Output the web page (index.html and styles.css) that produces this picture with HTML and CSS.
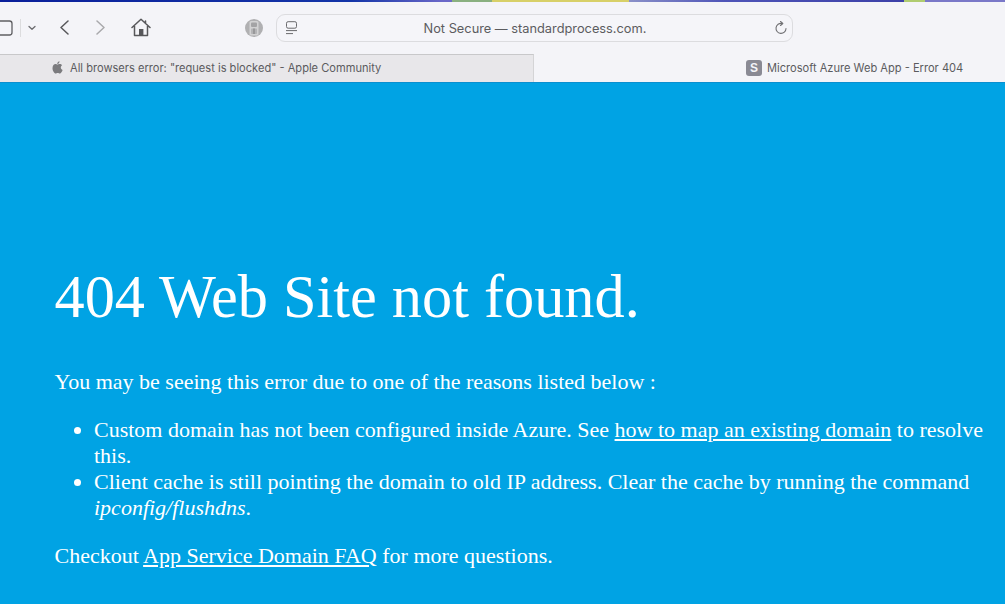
FILE: index.html
```html
<!DOCTYPE html>
<html lang="en">
<head>
<meta charset="utf-8">
<title>Microsoft Azure Web App - Error 404</title>
<link rel="stylesheet" href="styles.css">
</head>
<body>
<div class="window">
  <div class="wallpaper"></div>
  <header class="toolbar">
    <svg class="icon sidebar-btn" width="13" height="16" viewBox="0 0 13 16"><rect x="-4" y="1" width="16" height="14" rx="2.5" fill="none" stroke="#5f5f62" stroke-width="1.3"/></svg>
    <span class="divider"></span>
    <svg class="icon chevron-down" width="8" height="6" viewBox="0 0 8 6"><path d="M1 1.4 4 4.2 7 1.4" fill="none" stroke="#6b6b6e" stroke-width="1.3" stroke-linecap="round" stroke-linejoin="round"/></svg>
    <svg class="icon back" width="9" height="15" viewBox="0 0 9 15"><path d="M8 1 1 7.500l7 6.500" fill="none" stroke="#58585b" stroke-width="1.500" stroke-linecap="round" stroke-linejoin="round"/></svg>
    <svg class="icon forward" width="9" height="15" viewBox="0 0 9 15"><path d="M1 1 8 7.500l-7 6.500" fill="none" stroke="#a9a9ac" stroke-width="1.500" stroke-linecap="round" stroke-linejoin="round"/></svg>
    <svg class="icon home" width="20" height="19" viewBox="0 0 20 19"><path d="M1 9.500 10 1.200l9 8.300M3.500 8v9.600h13V8M14.500 3V5.600" fill="none" stroke="#57575a" stroke-width="1.500" stroke-linecap="round" stroke-linejoin="round"/><rect x="8" y="11" width="4.400" height="6.600" fill="#57575a"/></svg>
    <svg class="icon shield" width="18" height="18" viewBox="0 0 18 18"><circle cx="9" cy="9" r="9" fill="#b0b0b2"/><rect x="4.500" y="2" width="9" height="14.500" rx="1.500" fill="#d2d2d3"/><rect x="6" y="3.500" width="6" height="4.500" rx="1" fill="#a3a3a5"/><rect x="6" y="9.500" width="6" height="5.500" rx=".8" fill="#b4b4b6"/><rect x="8" y="9.500" width="2" height="5.500" fill="#98989a"/></svg>
    <div class="address">
      <svg class="icon reader" width="14" height="14" viewBox="0 0 14 14"><rect x="1.500" y="0.700" width="10" height="6.500" rx="1.600" fill="none" stroke="#6a6a6d" stroke-width="1"/><path d="M1 9.600h11M1 12.600h7" stroke="#6a6a6d" stroke-width="1"/></svg>
      <span class="address-text">Not Secure — standardprocess.com.</span>
      <svg class="icon reload" width="12" height="14" viewBox="0 0 12 14"><path d="M7 2.500A5 5 0 1 0 11 7.500" fill="none" stroke="#717174" stroke-width="1.100" stroke-linecap="round"/><path d="M5.500 0.500 7.800 2.500 5.500 4.500" fill="none" stroke="#717174" stroke-width="1.100" stroke-linecap="round" stroke-linejoin="round"/></svg>
    </div>
  </header>
  <nav class="tabs">
    <div class="tab tab-inactive">
      <svg class="favicon-apple" width="11" height="13" viewBox="0 0 11 13"><path d="M7.500 0.200C7.600 1.700 6.400 3 5.200 2.900 5.100 1.600 6.300 0.300 7.500 0.200ZM5.300 3.600c.6 0 1.300-.6 2.400-.6 1 0 1.900.5 2.400 1.300-2 1.200-1.600 3.900.5 4.700-.5 1.400-1.600 3.500-2.800 3.500-.8 0-1.100-.5-2.100-.5s-1.300.5-2.100.5C2.300 12.500.5 9.800.5 7.200.5 4.600 2 3 3.600 3c.7 0 1.300.6 1.700.6Z" fill="#7b7b7e"/></svg>
      <span class="tab-title">All browsers error: "request is blocked" - Apple Community</span>
    </div>
    <div class="tab tab-active">
      <span class="favicon-s">S</span>
      <span class="tab-title">Microsoft Azure Web App - Error 404</span>
    </div>
  </nav>
  <main class="page">
    <h1 class="headline">404 Web Site not found.</h1>
    <p class="intro">You may be seeing this error due to one of the reasons listed below :</p>
    <ul class="reasons">
      <li>Custom domain has not been configured inside Azure. See <a href="#">how to map an existing domain</a> to resolve this.</li>
      <li>Client cache is still pointing the domain to old IP address. Clear the cache by running the command <i>ipconfig/flushdns</i>.</li>
    </ul>
    <p class="outro">Checkout <a href="#">App Service Domain FAQ</a> for more questions.</p>
  </main>
</div>
</body>
</html>
```
FILE: styles.css
```css
* { box-sizing: border-box; }
html, body { margin: 0; height: 100%; overflow: hidden; }
body { background: #00a3e4; }
.window { width: 1005px; height: 604px; display: flex; flex-direction: column; overflow: hidden; }
.wallpaper {
  height: 2px; flex: none;
  background: linear-gradient(90deg, #0a1f9a 0, #1435a8 35%, #6a68c8 44%, #6c68c8 45%, #8ab080 45%, #8ab080 49%, #d8d068 49%, #d8d068 62.600%, #8a90c8 62.600%, #4f55b8 72%, #3c40a8 90%, #b0cc70 90%, #b0cc70 92%, #7a78c8 92%, #7a78c8 100%);
}
.toolbar {
  height: 52px; flex: none; display: flex; align-items: center;
  background: #f4f4f8; padding: 0 212px 1px 0;
}
.icon { flex: none; display: block; }
.divider { width: 1px; height: 18px; background: #dcdcde; margin-left: 7px; }
.chevron-down { margin-left: 7px; }
.back { margin-left: 24px; }
.forward { margin-left: 27px; }
.home { margin-left: 26px; }
.shield { margin-left: 94px; }
.address {
  flex: 1; height: 28px; margin: 1px 0 0 13px; display: flex; align-items: center;
  padding: 0 5px 0 8px; border: 1px solid #dcdcdf; border-radius: 9px; background: #f5f5f9;
}
.address-text {
  flex: 1; text-align: center; font: 12.800px "Inter", "Liberation Sans", sans-serif;
  color: #5c5c5f; padding-right: 4px;
}
.tabs { height: 28px; flex: none; display: flex; font: 11.100px "Inter", "Liberation Sans", sans-serif; color: #5b5b5e; }
.tab { display: flex; align-items: center; padding-bottom: 2px; }
.tab-inactive {
  width: 534px; padding-left: 52px; gap: 7px;
  background: #e8e7ea; border-top: 1px solid #c8c8ca; border-right: 1px solid #d4d4d6;
}
.tab-active { flex: 1; padding-left: 212px; gap: 5px; background: #f4f4f8; border-top: 1px solid #f4f4f8; }
.favicon-s {
  width: 16px; height: 16px; border-radius: 3px; background: #8a8a94; color: #f4f4f8;
  font: bold 12px "Liberation Sans", sans-serif; display: flex; align-items: center; justify-content: center;
}
.page {
  flex: 1; background: #00a3e4; color: #fff; border-top: 1px solid #0a8fd0;
  padding: 0 20px 0 54.500px; font: 22px/26px "Liberation Serif", "Times New Roman", serif;
}
.headline { margin: 179px 0 0; font: normal 60.300px/70px "Liberation Serif", "Times New Roman", serif; }
.intro { margin: 37px 0 0; }
.reasons { margin: 22px 0 0; padding-left: 39.500px; }
.outro { margin: 22px 0 0; }
.page a { color: #fff; text-decoration: underline; }
```
